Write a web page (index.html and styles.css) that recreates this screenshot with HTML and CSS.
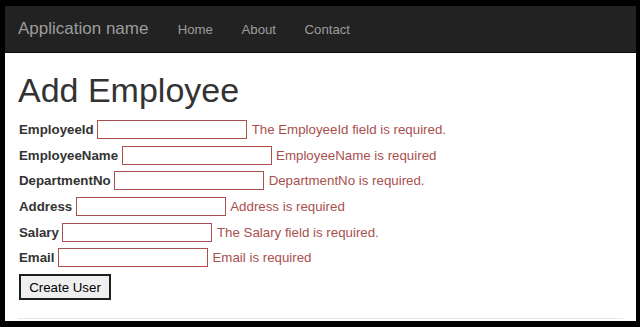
FILE: index.html
```html
<!DOCTYPE html>
<html lang="en">
<head>
<meta charset="utf-8">
<title>Add Employee</title>
<link rel="stylesheet" href="styles.css">
</head>
<body>
<div class="frame">
  <nav class="navbar">
    <a class="brand" href="#">Application name</a>
    <ul class="nav">
      <li><a href="#">Home</a></li>
      <li><a href="#">About</a></li>
      <li><a href="#">Contact</a></li>
    </ul>
  </nav>
  <main class="content">
    <h1 class="title">Add Employee</h1>
    <form class="form">
      <div class="row"><label class="label">EmployeeId</label><input class="field" type="text"><span class="error">The EmployeeId field is required.</span></div>
      <div class="row"><label class="label">EmployeeName</label><input class="field" type="text"><span class="error">EmployeeName is required</span></div>
      <div class="row"><label class="label">DepartmentNo</label><input class="field" type="text"><span class="error">DepartmentNo is required.</span></div>
      <div class="row"><label class="label">Address</label><input class="field" type="text"><span class="error">Address is required</span></div>
      <div class="row"><label class="label">Salary</label><input class="field" type="text"><span class="error">The Salary field is required.</span></div>
      <div class="row"><label class="label">Email</label><input class="field" type="text"><span class="error">Email is required</span></div>
      <div class="actions"><button class="button" type="button">Create User</button></div>
    </form>
    <hr class="rule">
  </main>
</div>
</body>
</html>
```
FILE: styles.css
```css
html, body {
  margin: 0;
  padding: 0;
  background: #000;
  height: 327px;
  overflow: hidden;
}

body {
  font-family: "Liberation Sans", Arial, sans-serif;
}

.frame {
  margin: 6px 4px 6px 5px;
  height: 315px;
  background: #fff;
  overflow: hidden;
  display: flex;
  flex-direction: column;
}

.navbar {
  height: 47px;
  box-sizing: border-box;
  background: #222;
  border-bottom: 1px solid #080808;
  display: flex;
  align-items: center;
  padding-left: 13px;
  flex-shrink: 0;
}

.brand {
  color: #9d9d9d;
  font-size: 17px;
  text-decoration: none;
  margin-right: 15px;
}

.nav {
  list-style: none;
  margin: 0;
  padding: 0;
  display: flex;
}

.nav a {
  display: block;
  color: #9d9d9d;
  font-size: 13.2px;
  text-decoration: none;
  padding: 0 14.3px;
}

.content {
  padding: 0 13px;
}

.title {
  font-size: 34px;
  line-height: 37px;
  font-weight: normal;
  color: #333;
  margin: 19px 0 8px;
}

.form {
  display: flex;
  flex-direction: column;
}

.row {
  display: flex;
  align-items: center;
  height: 25.6px;
  font-size: 13.3px;
}

.label {
  font-weight: bold;
  color: #333;
  margin-left: 1px;
  margin-right: 3.5px;
}

.field {
  box-sizing: border-box;
  width: 150px;
  height: 19px;
  border: 1px solid #a9504e;
  background: #fff;
  padding: 0 2px;
  margin: 0;
  font: inherit;
}

.error {
  color: #a9504e;
  margin-left: 4.5px;
}

.actions {
  margin-top: 3.5px;
  margin-left: 1px;
}

.button {
  box-sizing: border-box;
  height: 26px;
  width: 92px;
  padding: 0;
  border: 2px solid #1e1e1e;
  background: #efefef;
  color: #000;
  font-family: "Liberation Sans", Arial, sans-serif;
  font-size: 13.3px;
}

.rule {
  border: 0;
  border-top: 1px solid #e8e8e8;
  margin: 18px 0 0;
  height: 0;
}
```
